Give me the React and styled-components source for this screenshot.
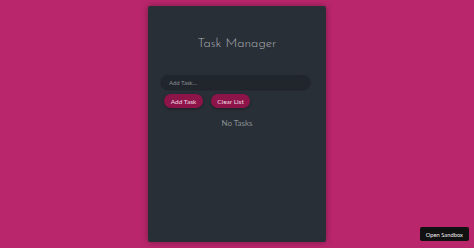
import React from 'react';
import styled, { createGlobalStyle } from 'styled-components';

const GlobalStyle = createGlobalStyle`
  html, body {
    margin: 0;
    height: 100%;
    background: #b9266c;
    font-family: "Lato", "Open Sans", sans-serif;
  }
  #root {
    height: 100%;
  }
`;

const Page = styled.div`
  height: 248px;
  display: flex;
  justify-content: center;
  align-items: flex-start;
  padding-top: 6px;
  box-sizing: border-box;
  position: relative;
`;

const Card = styled.div`
  width: 178px;
  height: 236px;
  background: #292f37;
  border-radius: 2px;
  box-shadow: 0 0 6px rgba(0, 0, 0, 0.35);
  display: flex;
  flex-direction: column;
  align-items: center;
  box-sizing: border-box;
  padding: 31px 13px 0;
`;

const Title = styled.h1`
  margin: 0;
  font-family: "Josefin Sans", "Lato", sans-serif;
  font-weight: 300;
  font-size: 13px;
  letter-spacing: 0;
  color: #a9adb2;
`;

const Form = styled.div`
  width: 149px;
  align-self: flex-start;
  margin-top: 25px;
  display: flex;
  flex-direction: column;
  gap: 5px;
`;

const Input = styled.input`
  width: 100%;
  height: 14px;
  box-sizing: border-box;
  border: none;
  outline: none;
  border-radius: 7px;
  background: #21252c;
  color: #ccc;
  font-family: "Lato", sans-serif;
  font-size: 6px;
  padding: 0 8px;
  box-shadow: 0 1px 2px rgba(0, 0, 0, 0.3);

  &::placeholder {
    color: #8a8e94;
  }
`;

const Buttons = styled.div`
  display: flex;
  gap: 8px;
  padding-left: 3px;
`;

const Button = styled.button`
  height: 14px;
  width: ${p => p.$w}px;
  border: none;
  border-radius: 7px;
  background: #8d1449;
  color: #f1dbe4;
  font-family: "Lato", sans-serif;
  font-size: 6.5px;
  padding: 0;
  box-shadow: 0 1px 3px rgba(0, 0, 0, 0.35);
`;

const Empty = styled.p`
  margin: 10px 0 0;
  font-family: "Lato", sans-serif;
  font-size: 8px;
  color: #8b8f95;
`;

const Sandbox = styled.button`
  position: absolute;
  right: 5px;
  bottom: 7px;
  height: 14px;
  padding: 0 6px;
  border: none;
  border-radius: 2px;
  background: #111;
  color: #eee;
  font-family: "Lato", sans-serif;
  font-size: 5.8px;
`;

export default function App() {
  return (
    <>
      <GlobalStyle />
      <Page>
        <Card>
          <Title>Task Manager</Title>
          <Form>
            <Input placeholder="Add Task..." />
            <Buttons>
              <Button $w={39}>Add Task</Button>
              <Button $w={39}>Clear List</Button>
            </Buttons>
          </Form>
          <Empty>No Tasks</Empty>
        </Card>
        <Sandbox>Open Sandbox</Sandbox>
      </Page>
    </>
  );
}
